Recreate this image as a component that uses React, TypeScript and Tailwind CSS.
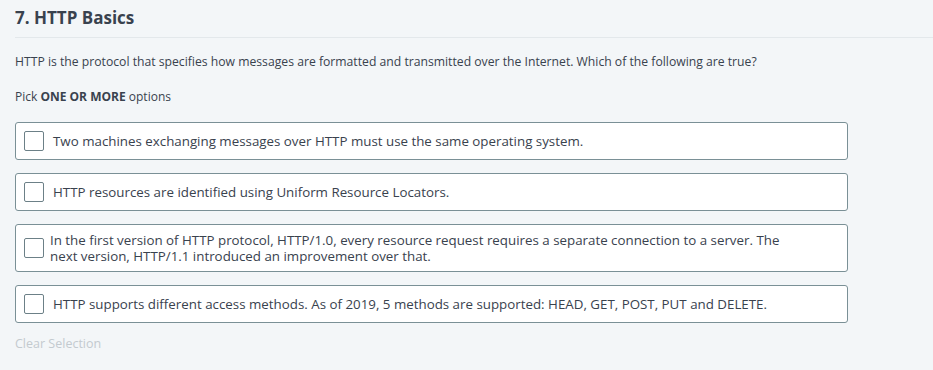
const options = [
  "Two machines exchanging messages over HTTP must use the same operating system.",
  "HTTP resources are identified using Uniform Resource Locators.",
  "In the first version of HTTP protocol, HTTP/1.0, every resource request requires a separate connection to a server. The next version, HTTP/1.1 introduced an improvement over that.",
  "HTTP supports different access methods. As of 2019, 5 methods are supported: HEAD, GET, POST, PUT and DELETE.",
];

function Option({ text, multi }: { text: string; multi?: boolean }) {
  return (
    <label
      className={
        multi
          ? "flex h-[48px] w-[833px] items-center gap-[6px] rounded-[3px] border border-[#7a9096] bg-white pl-[8px] pr-4"
          : "flex h-[38px] w-[833px] items-center gap-[9px] rounded-[3px] border border-[#7a9096] bg-white pl-[8px] pr-4"
      }
    >
      <span className="h-5 w-5 shrink-0 rounded-[2px] border border-[#6c8087] bg-white" />
      <span
        className={
          multi
            ? "max-w-[740px] text-[13.33px] leading-4 text-[#39424e]"
            : "text-[13.33px] leading-4 text-[#39424e]"
        }
      >
        {text}
      </span>
    </label>
  );
}

export default function App() {
  return (
    <main className="h-[370px] w-[933px] overflow-hidden bg-[#f3f6f8] pl-[15px] font-['Open_Sans',sans-serif]">
      <h2 className="border-b border-[#e3e8eb] pt-[6px] pb-[7px] text-[17px] font-bold leading-6 text-[#39424e]">
        7. HTTP Basics
      </h2>

      <p className="mt-[16px] text-[12.2px] leading-4 text-[#39424e]">
        HTTP is the protocol that specifies how messages are formatted and transmitted over the Internet. Which of the
        following are true?
      </p>

      <p className="mt-[19px] text-[12px] leading-4 text-[#39424e]">
        Pick <b>ONE OR MORE</b> options
      </p>

      <div className="mt-[17px] flex flex-col gap-[13px]">
        {options.map((t, i) => (
          <Option key={i} text={t} multi={i === 2} />
        ))}
      </div>

      <div className="mt-[13px] text-[12.5px] leading-4 text-[#c3cacf]">Clear Selection</div>
    </main>
  );
}
